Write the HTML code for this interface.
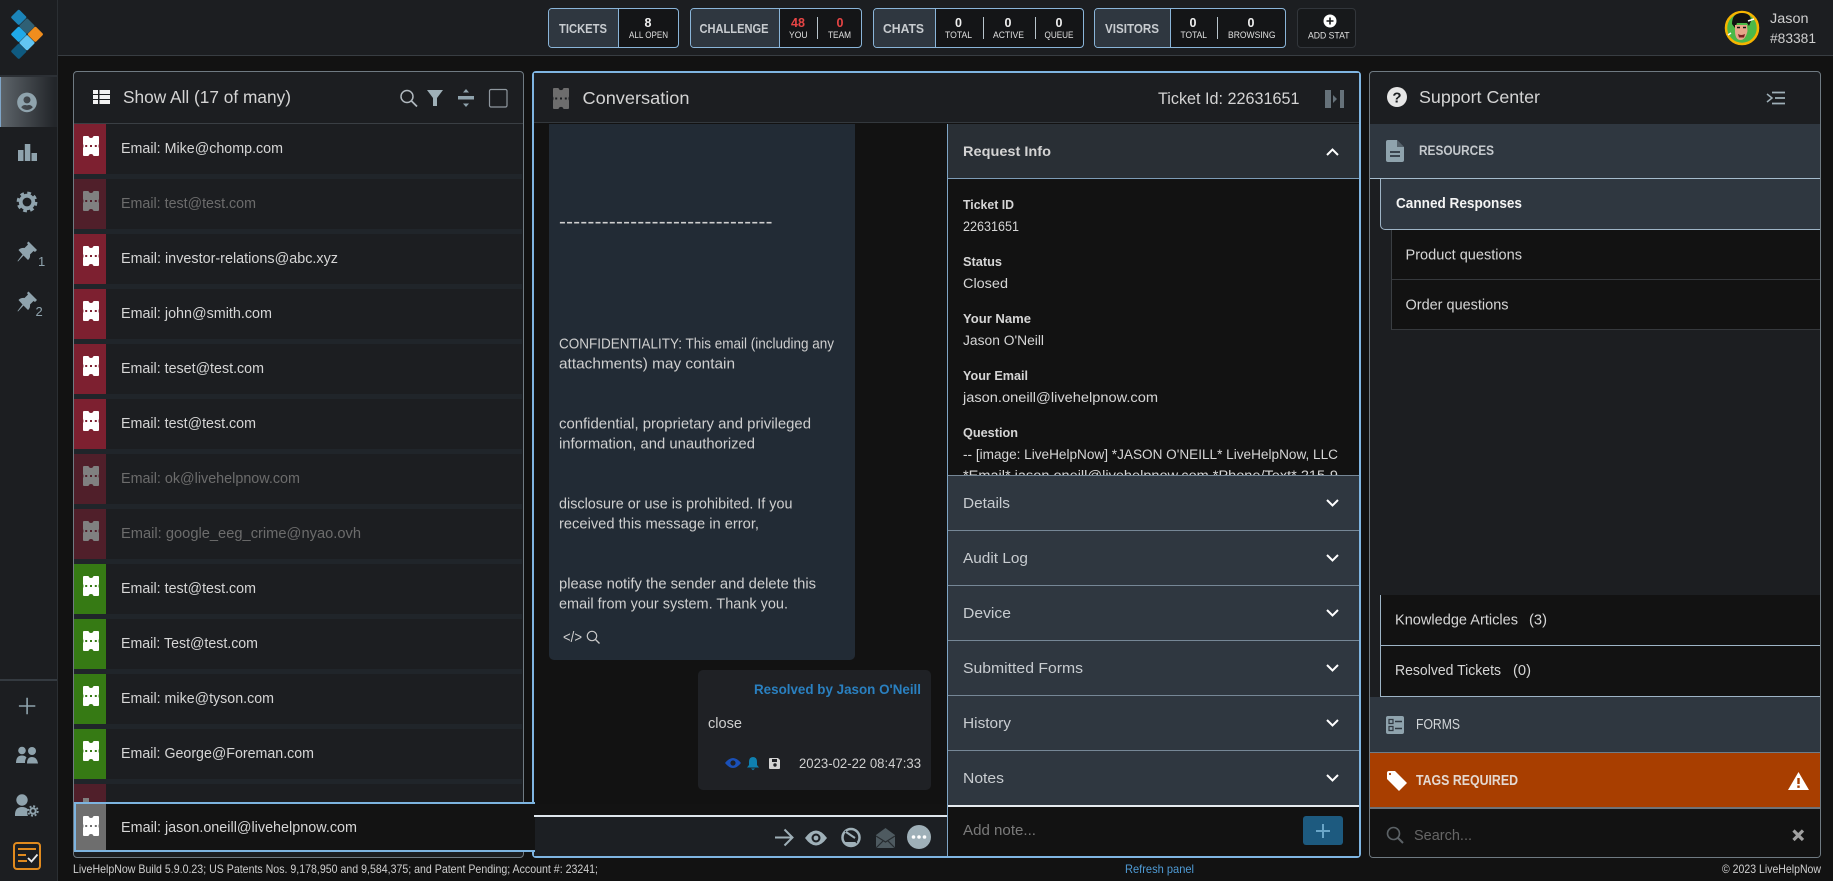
<!DOCTYPE html>
<html lang="en"><head><meta charset="utf-8"><title>LiveHelpNow</title>
<style>
html,body{margin:0;padding:0;background:#121212;width:1833px;height:881px;overflow:hidden}
.a{position:absolute;box-sizing:border-box}
svg{position:absolute;left:0;top:0;z-index:10}
text{font-family:"Liberation Sans",sans-serif;font-size:14.5px;fill:#d6d6d6}
.b{font-weight:700}
.lb{font-size:12.5px;font-weight:700;fill:#c8ccd0}
.v{font-size:15px;font-weight:700;fill:#f0f0f0;text-anchor:middle}
.s{font-size:9.5px;fill:#e0e0e0}
.t{font-size:17.5px;fill:#d4d4d4}
.f{font-size:12px;fill:#cfcfcf}
.dim{fill:#6c6c6c}
.m{fill:#cfcfcf}
.stat{background:#141517;border:1px solid #8ab5d9;border-radius:4px;top:8px;height:40px;overflow:hidden}
.stat i{position:absolute;left:0;top:0;bottom:0;background:#2f3740;border-right:1px solid #8ab5d9}
.stat u{position:absolute;top:8px;bottom:8px;width:1px;background:#b8c4cc}
.row{left:74px;width:448px;height:50px;background:#1c1e21}
.row b{position:absolute;left:0;top:0;width:32px;height:50px}
.gap{left:74px;width:448px;height:5px;background:#20252a}
.acc{left:948px;width:411px;height:55px;background:#2f3740;border-top:1px solid #768796}
</style></head><body>

<!-- top bar & sidebar -->
<div class="a" style="left:0;top:0;width:1833px;height:56px;background:#1c1e21;border-bottom:1px solid #383d42"></div>
<div class="a" style="left:0;top:0;width:58px;height:881px;background:#1c1e21;border-right:1px solid #2b2f33"></div>
<div class="a" style="left:0;top:75px;width:57px;height:2px;background:#2c3035"></div>
<div class="a" style="left:0;top:77px;width:57px;height:50px;background:linear-gradient(90deg,#5d646a,#23262a 95%);border-left:1px solid #7fa5c8"></div>
<div class="a" style="left:0;top:679px;width:57px;height:2px;background:#343a40"></div>

<!-- stats -->
<div class="a stat" style="left:548px;width:131px"><i style="width:69px"></i></div>
<div class="a stat" style="left:690px;width:172px"><i style="width:88px"></i><u style="left:126px"></u></div>
<div class="a stat" style="left:873px;width:211px"><i style="width:61px"></i><u style="left:109px"></u><u style="left:161px"></u></div>
<div class="a stat" style="left:1094px;width:192px"><i style="width:75px"></i><u style="left:122px"></u></div>
<div class="a" style="left:1297px;top:8px;width:59px;height:40px;background:#17191b;border:1px solid #32363b;border-radius:4px"></div>

<!-- left panel -->
<div class="a" style="left:73px;top:71px;width:451px;height:787px;background:#1c1e21;border:1px solid #6f7a82;border-radius:4px"></div>
<div class="a" style="left:74px;top:123px;width:449px;height:1px;background:#3a3f44"></div>
<div class="a row" style="top:124px"><b style="background:#7d2030"></b></div><div class="a gap" style="top:174px"></div>
<div class="a row" style="top:179px"><b style="background:#501f2a"></b></div><div class="a gap" style="top:229px"></div>
<div class="a row" style="top:234px"><b style="background:#7d2030"></b></div><div class="a gap" style="top:284px"></div>
<div class="a row" style="top:289px"><b style="background:#7d2030"></b></div><div class="a gap" style="top:339px"></div>
<div class="a row" style="top:344px"><b style="background:#7d2030"></b></div><div class="a gap" style="top:394px"></div>
<div class="a row" style="top:399px"><b style="background:#7d2030"></b></div><div class="a gap" style="top:449px"></div>
<div class="a row" style="top:454px"><b style="background:#501f2a"></b></div><div class="a gap" style="top:504px"></div>
<div class="a row" style="top:509px"><b style="background:#501f2a"></b></div><div class="a gap" style="top:559px"></div>
<div class="a row" style="top:564px"><b style="background:#367a14"></b></div><div class="a gap" style="top:614px"></div>
<div class="a row" style="top:619px"><b style="background:#367a14"></b></div><div class="a gap" style="top:669px"></div>
<div class="a row" style="top:674px"><b style="background:#367a14"></b></div><div class="a gap" style="top:724px"></div>
<div class="a row" style="top:729px"><b style="background:#367a14"></b></div><div class="a gap" style="top:779px"></div>
<div class="a row" style="top:784px;height:20px"><b style="background:#501f2a;height:20px"></b></div>

<!-- conversation panel -->
<div class="a" style="left:532px;top:71px;width:829px;height:787px;background:#121212;border:2px solid #7fb5e2;border-radius:4px"></div>
<div class="a" style="left:534px;top:73px;width:825px;height:50px;background:#1c1e21;border-bottom:1px solid #33383d"></div>
<div class="a" style="left:549px;top:124px;width:306px;height:536px;background:#222b35;border-radius:0 0 5px 5px"></div>
<div class="a" style="left:698px;top:670px;width:233px;height:120px;background:#1f2125;border-radius:5px"></div>
<div class="a" style="left:534px;top:817px;width:413px;height:39px;background:#1c1f23"></div>

<!-- conversation details column -->
<div class="a" style="left:947px;top:124px;width:412px;height:732px;background:#121212;border-left:1px solid #7fa5c5"></div>
<div class="a" style="left:948px;top:124px;width:411px;height:55px;background:#292f35;border-bottom:1px solid #7d9cb6"></div>
<div class="a acc" style="top:475px"></div>
<div class="a acc" style="top:530px"></div>
<div class="a acc" style="top:585px"></div>
<div class="a acc" style="top:640px"></div>
<div class="a acc" style="top:695px"></div>
<div class="a acc" style="top:750px"></div>
<div class="a" style="left:948px;top:805px;width:411px;height:2px;background:#e6ebef"></div>
<div class="a" style="left:1303px;top:816px;width:40px;height:29px;background:#1d5a7f;border-radius:3px"></div>

<!-- selected row, overlapping the conversation border -->
<div class="a" style="left:74px;top:802px;width:461px;height:50px;background:#131313;border:2px solid #7db4e0;border-right:0"></div>
<div class="a" style="left:76px;top:804px;width:30px;height:46px;background:#6e6e6e"></div>
<div class="a" style="left:534px;top:804px;width:413px;height:11px;background:#131313"></div>
<div class="a" style="left:534px;top:815px;width:413px;height:2px;background:#dfe6ec"></div>

<!-- right panel -->
<div class="a" style="left:1369px;top:71px;width:452px;height:787px;background:#1c1e21;border:1px solid #6f7a82;border-radius:4px;overflow:hidden">
  <div class="a" style="left:0;top:52px;width:450px;height:55px;background:#2f3740"></div>
  <div class="a" style="left:10px;top:106px;width:440px;height:52px;background:#2f3740;border:1px solid #9eb4c6;border-right:0;border-top:0;border-radius:0 0 0 5px"></div>
  <div class="a" style="left:0;top:106px;width:450px;height:1px;background:#a6bccd"></div>
  <div class="a" style="left:21px;top:158px;width:429px;height:50px;background:#121212;border-left:1px solid #3a3e42;border-bottom:1px solid #36393d"></div>
  <div class="a" style="left:21px;top:208px;width:429px;height:50px;background:#121212;border-left:1px solid #3a3e42;border-bottom:1px solid #36393d"></div>
  <div class="a" style="left:10px;top:523px;width:440px;height:51px;background:#121212;border-left:1px solid #9eb4c6;border-bottom:1px solid #9eb4c6"></div>
  <div class="a" style="left:10px;top:574px;width:440px;height:51px;background:#121212;border-left:1px solid #9eb4c6;border-bottom:1px solid #9eb4c6"></div>
  <div class="a" style="left:0;top:625px;width:450px;height:56px;background:#2f3740;border-bottom:1px solid #6e7c88"></div>
  <div class="a" style="left:0;top:681px;width:450px;height:56px;background:#a83e00;border-bottom:2px solid #6e7278"></div>
  <div class="a" style="left:0;top:737px;width:450px;height:49px;background:#121212"></div>
</div>

<svg width="1833" height="881" viewBox="0 0 1833 881" xmlns="http://www.w3.org/2000/svg">
<defs>
<path id="tk" fill-rule="evenodd" d="M1 0H5.500Q6 2 8 2T10.500 0H15Q16 0 16 1V8Q15 10 16 12V19Q16 20 15 20H10.500Q10 18 8 18T5.500 20H1Q0 20 0 19V12Q1 10 0 8V1Q0 0 1 0ZM2.200 9V11H4.200V9ZM7 9V11H9V9ZM11.800 9V11H13.800V9Z"/>
<clipPath id="qc"><rect x="948" y="440" width="411" height="35"/></clipPath>
</defs>

<!-- logo -->
<g>
<rect x="13" y="11.500" width="11.500" height="11.500" rx="1.500" fill="#1b84b8" transform="rotate(45 18.700 17.300)"/>
<rect x="21.300" y="20.300" width="11.500" height="11.500" rx="1.500" fill="#2f6075" transform="rotate(45 27 26)"/>
<rect x="13" y="28.500" width="11.500" height="11.500" rx="1.500" fill="#1fa9e9" transform="rotate(45 18.700 34.300)"/>
<rect x="29.600" y="28.500" width="11.500" height="11.500" rx="1.500" fill="#f08d1d" transform="rotate(45 35.300 34.300)"/>
<rect x="21.300" y="37" width="11.500" height="11.500" rx="1.500" fill="#62c5f2" transform="rotate(45 27 42.700)"/>
<rect x="13" y="45.500" width="11.500" height="11.500" rx="1.500" fill="#0f5a80" transform="rotate(45 18.700 51.300)"/>
</g>

<!-- sidebar icons -->
<g fill="#8fa3ad">
<path transform="translate(17.200 92.300) scale(.0395)" d="M248 8C111 8 0 119 0 256s111 248 248 248 248-111 248-248S385 8 248 8zm0 96c48.600 0 88 39.400 88 88s-39.400 88-88 88-88-39.400-88-88 39.400-88 88-88zm0 344c-58.700 0-111.300-26.600-146.500-68.200 18.800-35.400 55.600-59.800 98.500-59.800 2.400 0 4.800.4 7.100 1.100 13 4.200 26.600 6.900 40.900 6.900 14.300 0 28-2.700 40.900-6.900 2.300-.7 4.700-1.100 7.100-1.100 42.900 0 79.700 24.400 98.500 59.800C359.300 421.400 306.700 448 248 448z"/>
<rect x="18" y="150" width="5.500" height="11"/><rect x="24.800" y="144" width="5.500" height="17"/><rect x="31.500" y="153" width="5.500" height="8"/>
<g fill="none" stroke="#8fa3ad"><circle cx="27" cy="202" r="6.300" stroke-width="3.800"/><circle cx="27" cy="202" r="9" stroke-width="2.800" stroke-dasharray="3.700 3.370"/></g>
<path d="M28.500 241.500L37 250L35 252L33.500 251L30 254.500Q30.500 258 28 260L23.500 255.500L18 261.500L17.500 261L22.500 254.500L18.500 250Q21 247.500 24.500 248L28 244.500L27 243z"/>
<path transform="translate(0 50)" d="M28.500 241.500L37 250L35 252L33.500 251L30 254.500Q30.500 258 28 260L23.500 255.500L18 261.500L17.500 261L22.500 254.500L18.500 250Q21 247.500 24.500 248L28 244.500L27 243z"/>
<path d="M26.300 697.800h1.600v7.400h7.400v1.600h-7.400v7.400h-1.600v-7.400h-7.400v-1.600h7.400z"/>
<circle cx="22" cy="750.500" r="3.800"/><circle cx="32" cy="751" r="4"/><path d="M16 763q0-7.500 6-7.500 3 0 4.500 2-1.500 2-1.500 5.500zM27 763.500q0-6.500 5-6.500t6 6.500z"/>
<circle cx="22" cy="800" r="5.700"/><path d="M15 816q-.5-9 7-9 4 0 6 2.500-1.500 3 0 6.500z"/>
<g fill="none" stroke="#8fa3ad"><circle cx="33" cy="811" r="2.700" stroke-width="2"/><circle cx="33" cy="811" r="4.800" stroke-width="1.800" stroke-dasharray="2 1.770"/></g>
</g>
<text x="38" y="266" style="fill:#8fa3ad;font-size:13px">1</text>
<text x="35.500" y="316" style="fill:#8fa3ad;font-size:13px">2</text>
<g>
<rect x="14" y="843" width="26" height="26" rx="3" fill="none" stroke="#e08a1e" stroke-width="2"/>
<path d="M18 849h18M18 855h8M18 861h9" stroke="#e08a1e" stroke-width="2" fill="none"/>
<path d="M28 858l3.500 3.500 6-7" stroke="#e8e8e8" stroke-width="1.800" fill="none"/>
</g>

<!-- top stats text -->
<text x="559" y="33" class="lb" textLength="48" lengthAdjust="spacingAndGlyphs">TICKETS</text>
<text x="648" y="27" class="v" style="font-size:12.5px">8</text>
<text x="629" y="38" class="s" textLength="39" lengthAdjust="spacingAndGlyphs">ALL OPEN</text>
<text x="699.500" y="33" class="lb" textLength="69" lengthAdjust="spacingAndGlyphs">CHALLENGE</text>
<text x="798" y="27" class="v" style="font-size:12.5px;fill:#e84545">48</text>
<text x="789" y="38" class="s" textLength="18.500" lengthAdjust="spacingAndGlyphs">YOU</text>
<text x="840" y="27" class="v" style="font-size:12.5px;fill:#e84545">0</text>
<text x="828" y="38" class="s" textLength="23" lengthAdjust="spacingAndGlyphs">TEAM</text>
<text x="883" y="33" class="lb" textLength="41" lengthAdjust="spacingAndGlyphs">CHATS</text>
<text x="958.500" y="27" class="v" style="font-size:12.500px">0</text>
<text x="945" y="38" class="s" textLength="27" lengthAdjust="spacingAndGlyphs">TOTAL</text>
<text x="1008" y="27" class="v" style="font-size:12.500px">0</text>
<text x="993" y="38" class="s" textLength="31" lengthAdjust="spacingAndGlyphs">ACTIVE</text>
<text x="1059" y="27" class="v" style="font-size:12.500px">0</text>
<text x="1044.500" y="38" class="s" textLength="29" lengthAdjust="spacingAndGlyphs">QUEUE</text>
<text x="1105" y="33" class="lb" textLength="54" lengthAdjust="spacingAndGlyphs">VISITORS</text>
<text x="1193" y="27" class="v" style="font-size:12.500px">0</text>
<text x="1180.500" y="38" class="s" textLength="26.500" lengthAdjust="spacingAndGlyphs">TOTAL</text>
<text x="1251" y="27" class="v" style="font-size:12.500px">0</text>
<text x="1228" y="38" class="s" textLength="47.500" lengthAdjust="spacingAndGlyphs">BROWSING</text>
<circle cx="1330" cy="21" r="6.500" fill="#fff"/><path d="M1330 17.500v7M1326.500 21h7" stroke="#17191b" stroke-width="1.600"/>
<text x="1308" y="38.500" class="s" textLength="41.500" lengthAdjust="spacingAndGlyphs">ADD STAT</text>

<!-- avatar -->
<circle cx="1742" cy="28" r="16" fill="#4cb848" stroke="#f5b400" stroke-width="2.500"/>
<path d="M1732 24q0-11 10-11 9 0 9 8l-2 5-2-3-10 0-2 5z" fill="#111"/>
<path d="M1735 25h12l.5 6q-2 9-7 9t-5.500-8z" fill="#e8a68a"/>
<path d="M1738 34q3 2 7 0l-1 3.500h-5z" fill="#7a2020"/><path d="M1737 27.500h3M1743 27.500h3" stroke="#111" stroke-width="1.500"/>
<path d="M1748 21l6-2M1731 33l-3 2" stroke="#fff" stroke-width="1.500"/>
<text x="1770" y="23" style="font-size:13.500px;fill:#cfcfcf" textLength="38.500" lengthAdjust="spacingAndGlyphs">Jason</text>
<text x="1770" y="43" style="font-size:14px;fill:#cfcfcf" textLength="46" lengthAdjust="spacingAndGlyphs">#83381</text>

<!-- left panel header -->
<g fill="#f2f2f2"><path d="M93 90h5v4h-5zM99.500 90H110v4H99.500zM93 95h5v4h-5zM99.500 95H110v4H99.500zM93 100h5v4h-5zM99.500 100H110v4H99.500z"/></g>
<text x="123" y="103" class="t" textLength="168" lengthAdjust="spacingAndGlyphs">Show All (17 of many)</text>
<circle cx="407" cy="96.500" r="6" fill="none" stroke="#b0b8be" stroke-width="1.500"/><path d="M411.500 101l5.500 5.500" stroke="#b0b8be" stroke-width="1.800"/>
<path d="M427 90h16l-6 8v8h-4v-8z" fill="#9fb0b8"/>
<path d="M458 96h16v3.500h-16zM466 89l3 3.500h-6zM466 107l3-3.500h-6z" fill="#8fa3ad"/>
<rect x="489.500" y="89.500" width="17.500" height="17.500" rx="1.500" fill="none" stroke="#8f989f" stroke-width="1.200"/>

<!-- ticket icons -->
<g fill="#fff">
<use href="#tk" x="83" y="136"/><use href="#tk" x="83" y="191" fill="#808080"/><use href="#tk" x="83" y="246"/><use href="#tk" x="83" y="301"/>
<use href="#tk" x="83" y="356"/><use href="#tk" x="83" y="411"/><use href="#tk" x="83" y="466" fill="#808080"/><use href="#tk" x="83" y="521" fill="#808080"/>
<use href="#tk" x="83" y="576"/><use href="#tk" x="83" y="631"/><use href="#tk" x="83" y="686"/><use href="#tk" x="83" y="741"/>
<rect x="83" y="798" width="6" height="4" fill="#808080"/>
<use href="#tk" x="83" y="816"/>
</g>
<text x="121" y="153" textLength="162" lengthAdjust="spacingAndGlyphs">Email: Mike@chomp.com</text>
<text x="121" y="208" class="dim" textLength="135" lengthAdjust="spacingAndGlyphs">Email: test@test.com</text>
<text x="121" y="263" textLength="217" lengthAdjust="spacingAndGlyphs">Email: investor-relations@abc.xyz</text>
<text x="121" y="318" textLength="151" lengthAdjust="spacingAndGlyphs">Email: john@smith.com</text>
<text x="121" y="373" textLength="143" lengthAdjust="spacingAndGlyphs">Email: teset@test.com</text>
<text x="121" y="428" textLength="135" lengthAdjust="spacingAndGlyphs">Email: test@test.com</text>
<text x="121" y="483" class="dim" textLength="179" lengthAdjust="spacingAndGlyphs">Email: ok@livehelpnow.com</text>
<text x="121" y="538" class="dim" textLength="240" lengthAdjust="spacingAndGlyphs">Email: google_eeg_crime@nyao.ovh</text>
<text x="121" y="593" textLength="135" lengthAdjust="spacingAndGlyphs">Email: test@test.com</text>
<text x="121" y="648" textLength="137" lengthAdjust="spacingAndGlyphs">Email: Test@test.com</text>
<text x="121" y="703" textLength="153" lengthAdjust="spacingAndGlyphs">Email: mike@tyson.com</text>
<text x="121" y="758" textLength="193" lengthAdjust="spacingAndGlyphs">Email: George@Foreman.com</text>
<text x="121" y="832" textLength="236" lengthAdjust="spacingAndGlyphs">Email: jason.oneill@livehelpnow.com</text>

<!-- conversation header -->
<use href="#tk" transform="translate(553 88) scale(1 1.050)" fill="#6d6d6d"/>
<text x="582.500" y="104" class="t" textLength="107" lengthAdjust="spacingAndGlyphs">Conversation</text>
<text x="1158" y="104" style="font-size:16.500px;fill:#d4d4d4" textLength="141.500" lengthAdjust="spacingAndGlyphs">Ticket Id: 22631651</text>
<path d="M1325 90h6v18h-6zM1340 90h4v18h-4z" fill="#66727a"/><path d="M1333 95l4 4-4 4z" fill="#66727a"/>

<!-- message -->
<text x="559" y="228" class="m" style="font-size:20.500px" textLength="213.500" lengthAdjust="spacing">------------------------------</text>
<text x="559" y="348.500" class="m" textLength="275" lengthAdjust="spacingAndGlyphs">CONFIDENTIALITY: This email (including any</text>
<text x="559" y="368.500" class="m" textLength="176" lengthAdjust="spacingAndGlyphs">attachments) may contain</text>
<text x="559" y="428.500" class="m" textLength="252" lengthAdjust="spacingAndGlyphs">confidential, proprietary and privileged</text>
<text x="559" y="448.500" class="m" textLength="196" lengthAdjust="spacingAndGlyphs">information, and unauthorized</text>
<text x="559" y="508.500" class="m" textLength="233.500" lengthAdjust="spacingAndGlyphs">disclosure or use is prohibited. If you</text>
<text x="559" y="528.500" class="m" textLength="200" lengthAdjust="spacingAndGlyphs">received this message in error,</text>
<text x="559" y="588.500" class="m" textLength="257" lengthAdjust="spacingAndGlyphs">please notify the sender and delete this</text>
<text x="559" y="608.500" class="m" textLength="229" lengthAdjust="spacingAndGlyphs">email from your system. Thank you.</text>
<text x="563" y="642" class="m" textLength="19" lengthAdjust="spacingAndGlyphs">&lt;/&gt;</text>
<circle cx="592" cy="636" r="4.700" fill="none" stroke="#c8c8c8" stroke-width="1.200"/><path d="M595.500 639.500l4 4" stroke="#c8c8c8" stroke-width="1.300"/>

<text x="754" y="694" class="b" style="font-size:14px;fill:#2a80c0" textLength="167" lengthAdjust="spacingAndGlyphs">Resolved by Jason O'Neill</text>
<text x="708" y="728" class="m" textLength="34" lengthAdjust="spacingAndGlyphs">close</text>
<path d="M725 763q8-10 16 0-8 10-16 0z" fill="#1a50b8"/><circle cx="733" cy="763" r="2.600" fill="#1f2125"/>
<path d="M753 757q4 0 4 5v3l2 2.500h-12l2-2.500v-3q0-5 4-5zM751 768.500h4l-2 1.800z" fill="#0f80b0"/>
<path d="M770 758h8l2 2v8q0 1-1 1h-9q-1 0-1-1v-9q0-1 1-1z" fill="#d4d4d4"/><rect x="772" y="759" width="5" height="3" fill="#1f2125"/><circle cx="775" cy="765" r="1.700" fill="#1f2125"/>
<text x="799" y="768" class="m" style="font-size:14px" textLength="122" lengthAdjust="spacingAndGlyphs">2023-02-22 08:47:33</text>

<!-- composer icons -->
<path d="M775 837.500h17M784.500 829.500l8 8-8 8" fill="none" stroke="#9fb0b8" stroke-width="2"/>
<path d="M805 838q11-15 22 0-11 15-22 0z" fill="#9fb0b8"/><circle cx="816" cy="838" r="4.500" fill="#1c1f23"/><circle cx="816" cy="838" r="2.400" fill="#9fb0b8"/>
<circle cx="851" cy="837.500" r="8.500" fill="none" stroke="#9fb0b8" stroke-width="2.500"/><path d="M843 842a9 9 0 0 0 16 0z" fill="#9fb0b8"/><path d="M845 831l12 12" stroke="#1c1f23" stroke-width="1"/><path d="M846 832l9 6" stroke="#9fb0b8" stroke-width="2"/>
<path d="M876 835l9.500-7 9.500 7v13h-19z" fill="#4e5a60"/><path d="M876 836l9.500 6 9.500-6M876 848l7-7M895 848l-7-7" fill="none" stroke="#262b2f" stroke-width="1.200"/>
<circle cx="919" cy="837" r="12" fill="#9fb0b8"/><circle cx="913.500" cy="837" r="1.800" fill="#fff"/><circle cx="919" cy="837" r="1.800" fill="#fff"/><circle cx="924.500" cy="837" r="1.800" fill="#fff"/>

<!-- request info -->
<text x="963" y="156" class="b" style="font-size:14px;fill:#d4d4d4" textLength="88" lengthAdjust="spacingAndGlyphs">Request Info</text>
<path d="M1327 155l5.500-5.500 5.500 5.500" fill="none" stroke="#fff" stroke-width="2"/>
<g>
<text x="963" y="209" class="b" style="font-size:12.500px" textLength="51" lengthAdjust="spacingAndGlyphs">Ticket ID</text>
<text x="963" y="231" style="font-size:13.500px" textLength="56" lengthAdjust="spacingAndGlyphs">22631651</text>
<text x="963" y="266" class="b" style="font-size:12.500px" textLength="39" lengthAdjust="spacingAndGlyphs">Status</text>
<text x="963" y="288" style="font-size:13.500px" textLength="45" lengthAdjust="spacingAndGlyphs">Closed</text>
<text x="963" y="323" class="b" style="font-size:12.500px" textLength="68" lengthAdjust="spacingAndGlyphs">Your Name</text>
<text x="963" y="345" style="font-size:13.500px" textLength="81" lengthAdjust="spacingAndGlyphs">Jason O'Neill</text>
<text x="963" y="380" class="b" style="font-size:12.500px" textLength="65" lengthAdjust="spacingAndGlyphs">Your Email</text>
<text x="963" y="402" style="font-size:13.500px" textLength="195" lengthAdjust="spacingAndGlyphs">jason.oneill@livehelpnow.com</text>
<text x="963" y="437" class="b" style="font-size:12.500px" textLength="55" lengthAdjust="spacingAndGlyphs">Question</text>
<text x="963" y="459" style="font-size:13.500px" textLength="375" lengthAdjust="spacingAndGlyphs">-- [image: LiveHelpNow] *JASON O'NEILL* LiveHelpNow, LLC</text>
<text x="963" y="480" clip-path="url(#qc)" style="font-size:13.500px" textLength="375" lengthAdjust="spacingAndGlyphs">*Email* jason.oneill@livehelpnow.com *Phone/Text* 215-9</text>
</g>
<text x="963" y="508" style="fill:#c8ccd0" textLength="47" lengthAdjust="spacingAndGlyphs">Details</text>
<text x="963" y="563" style="fill:#c8ccd0" textLength="65" lengthAdjust="spacingAndGlyphs">Audit Log</text>
<text x="963" y="618" style="fill:#c8ccd0" textLength="48" lengthAdjust="spacingAndGlyphs">Device</text>
<text x="963" y="673" style="fill:#c8ccd0" textLength="120" lengthAdjust="spacingAndGlyphs">Submitted Forms</text>
<text x="963" y="728" style="fill:#c8ccd0" textLength="48" lengthAdjust="spacingAndGlyphs">History</text>
<text x="963" y="783" style="fill:#c8ccd0" textLength="41" lengthAdjust="spacingAndGlyphs">Notes</text>
<g fill="none" stroke="#fff" stroke-width="2">
<path d="M1327 500l5.500 5.500 5.500-5.500M1327 555l5.500 5.500 5.500-5.500M1327 610l5.500 5.500 5.500-5.500M1327 665l5.500 5.500 5.500-5.500M1327 720l5.500 5.500 5.500-5.500M1327 775l5.500 5.500 5.500-5.500"/>
</g>
<text x="963" y="835" style="fill:#7a7a7a" textLength="73" lengthAdjust="spacingAndGlyphs">Add note...</text>
<path d="M1323 824v14M1316 831h14" stroke="#6aa6c8" stroke-width="2"/>

<!-- support center -->
<circle cx="1397" cy="97" r="10" fill="#e6e6e6"/>
<text x="1397" y="102.500" class="b" style="font-size:15px;fill:#1c1e21;text-anchor:middle">?</text>
<text x="1419" y="103" class="t" textLength="121" lengthAdjust="spacingAndGlyphs">Support Center</text>
<path d="M1767 94l5 4-5 4" fill="none" stroke="#9fb0b8" stroke-width="1.500"/><path d="M1772 92.500h13M1775 98h10M1772 103.500h13" stroke="#9fb0b8" stroke-width="1.800"/>
<path d="M1386 142q0-2 2-2h9l7 7v13q0 2-2 2h-14q-2 0-2-2z" fill="#8fa3ad"/><path d="M1397 140v7h7z" fill="#2f3740" opacity=".6"/><path d="M1390 152h10M1390 156h10" stroke="#2f3740" stroke-width="1.700"/>
<text x="1419" y="155" class="b" style="font-size:13.500px;fill:#c4c8cc" textLength="75" lengthAdjust="spacingAndGlyphs">RESOURCES</text>
<text x="1396" y="208" style="font-size:14.500px;fill:#f4f4f4;font-weight:700" textLength="126" lengthAdjust="spacingAndGlyphs">Canned Responses</text>
<text x="1405.500" y="259.500" textLength="116.500" lengthAdjust="spacingAndGlyphs">Product questions</text>
<text x="1405.500" y="309.500" textLength="103" lengthAdjust="spacingAndGlyphs">Order questions</text>
<text x="1395" y="624.500" textLength="123" lengthAdjust="spacingAndGlyphs">Knowledge Articles</text>
<text x="1529" y="624.500" textLength="18" lengthAdjust="spacingAndGlyphs">(3)</text>
<text x="1395" y="675" textLength="106" lengthAdjust="spacingAndGlyphs">Resolved Tickets</text>
<text x="1513" y="675" textLength="18" lengthAdjust="spacingAndGlyphs">(0)</text>
<rect x="1386" y="716" width="18" height="18" rx="2" fill="#8fa3ad"/><path d="M1389 719.500h4v4h-4zM1389 726.500h4v4h-4z" fill="none" stroke="#2f3740" stroke-width="1.200"/><path d="M1395 721.500h7M1395 728.500h7" stroke="#2f3740" stroke-width="1.500"/>
<text x="1416" y="729" style="fill:#d2d6d9" textLength="44" lengthAdjust="spacingAndGlyphs">FORMS</text>
<path d="M1387 773q0-2 2-2h6l12 12-8 8-12-12z" fill="#fff"/><circle cx="1390" cy="774" r="1.100" fill="#a83e00"/>
<text x="1416" y="785" class="b" style="font-size:14.500px;fill:#e4d8d0" textLength="102" lengthAdjust="spacingAndGlyphs">TAGS REQUIRED</text>
<path d="M1798.500 772l10.500 18h-21z" fill="#fff"/><path d="M1797.300 778h2.400v6h-2.400zM1797.300 785.500h2.400v2.400h-2.400z" fill="#a83e00"/>
<circle cx="1393.500" cy="833.500" r="6" fill="none" stroke="#5c6266" stroke-width="1.600"/><path d="M1398 838l5 5" stroke="#5c6266" stroke-width="2"/>
<text x="1414" y="840" style="fill:#666" textLength="58" lengthAdjust="spacingAndGlyphs">Search...</text>
<path d="M1793.500 830.500l9.500 9.500M1803 830.500l-9.500 9.500" stroke="#a0a0a0" stroke-width="3.200"/>

<!-- footer -->
<text x="73" y="873" class="f" textLength="525" lengthAdjust="spacingAndGlyphs">LiveHelpNow Build 5.9.0.23; US Patents Nos. 9,178,950 and 9,584,375; and Patent Pending; Account #: 23241;</text>
<text x="1125" y="873" class="f" style="fill:#4f9bd5" textLength="69" lengthAdjust="spacingAndGlyphs">Refresh panel</text>
<text x="1722" y="873" class="f" textLength="99" lengthAdjust="spacingAndGlyphs">© 2023 LiveHelpNow</text>
</svg>
</body></html>
